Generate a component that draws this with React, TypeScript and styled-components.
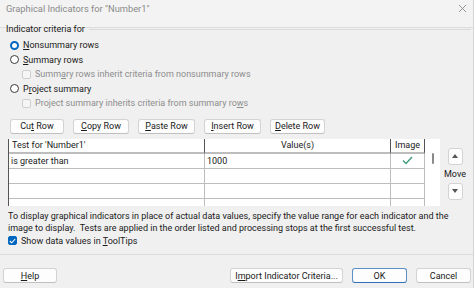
import React from "react";
import styled, { createGlobalStyle } from "styled-components";

const GlobalStyle = createGlobalStyle`
  html, body {
    margin: 0;
    padding: 0;
    background: #f0f0f0;
  }
  body {
    font-family: Roboto, "Noto Sans", sans-serif;
    font-size: 9px;
    color: #1a1a1a;
  }
`;

const Dialog = styled.div`
  width: 474px;
  height: 288px;
  box-sizing: border-box;
  background: #f0f0f0;
  border-right: 1px solid #d4d4d4;
  display: flex;
  flex-direction: column;
  overflow: hidden;
`;

const TitleBar = styled.div`
  height: 28px;
  flex: none;
  box-sizing: border-box;
  background: #f3f3f3;
  border-bottom: 1px solid #dcdcdc;
  display: flex;
  align-items: center;
  justify-content: space-between;
  padding: 0 6px 11px 6px;
`;

const Title = styled.span`
  font-size: 9.3px;
  color: #8a8a8a;
`;

const Body = styled.div`
  flex: 1;
  display: flex;
  flex-direction: column;
  padding: 0 2px 0 6px;
`;

const GroupHeader = styled.div`
  display: flex;
  align-items: center;
  gap: 4px;
  height: 12px;
  margin-top: -5px;
  &::after {
    content: "";
    flex: 1;
    height: 1px;
    background: #dadada;
  }
`;

const OptionList = styled.div`
  display: flex;
  flex-direction: column;
  padding-left: 4px;
  margin-top: 3px;
`;

const OptionRow = styled.label<{ $indent?: boolean; $disabled?: boolean }>`
  display: flex;
  align-items: center;
  gap: 4px;
  height: 14.5px;
  padding-left: ${(p) => (p.$indent ? "12px" : "0")};
  color: ${(p) => (p.$disabled ? "#8d8d8d" : "#1a1a1a")};
`;

const ShowRow = styled(OptionRow)`
  padding-left: 2px;
`;

const Radio = styled.span<{ $checked?: boolean }>`
  width: 9px;
  height: 9px;
  box-sizing: border-box;
  border-radius: 50%;
  border: ${(p) => (p.$checked ? "2.5px solid #0067c0" : "1px solid #3a3a3a")};
  background: #fff;
  flex: none;
`;

const Check = styled.span<{ $checked?: boolean }>`
  width: 9px;
  height: 9px;
  box-sizing: border-box;
  border-radius: 2px;
  border: 1px solid ${(p) => (p.$checked ? "#0067c0" : "#cfcfcf")};
  background: ${(p) => (p.$checked ? "#0067c0" : "#f5f5f5")};
  flex: none;
  display: flex;
  align-items: center;
  justify-content: center;
`;

const Key = styled.span`
  text-decoration: underline;
  text-underline-offset: 1px;
`;

const ButtonRow = styled.div`
  display: flex;
  gap: 9px;
  padding-left: 4px;
  margin-top: 8px;
`;

const Button = styled.button<{ $w: number; $default?: boolean }>`
  width: ${(p) => p.$w}px;
  height: 15px;
  padding: 0;
  font: inherit;
  color: #1a1a1a;
  background: #fdfdfd;
  border: 1px solid ${(p) => (p.$default ? "#5a8fc8" : "#d3d3d3")};
  border-bottom-color: ${(p) => (p.$default ? "#2f6fb5" : "#c0c0c0")};
  border-radius: 3px;
  display: flex;
  align-items: center;
  justify-content: center;
`;

const TableArea = styled.div`
  display: flex;
  margin-top: 5px;
  padding-left: 2px;
  gap: 6px;
`;

const Table = styled.div`
  width: 432px;
  height: 67px;
  background: #fff;
  display: flex;
  overflow: hidden;
`;

const Grid = styled.div`
  width: 416px;
  display: grid;
  grid-template-columns: 196px 186px 34px;
  grid-auto-rows: 15px;
  border-left: 1px solid #555;
  align-content: start;
`;

const HeadCell = styled.div<{ $align?: string }>`
  border-bottom: 2px solid #bdbdbd;
  border-right: 1px solid #555;
  display: flex;
  align-items: center;
  justify-content: ${(p) => p.$align || "center"};
  padding-left: ${(p) => (p.$align ? "3px" : "0")};
  box-sizing: border-box;
  height: 15px;
`;

const Cell = styled.div`
  border-bottom: 1px solid #bdbdbd;
  border-right: 1px solid #bdbdbd;
  display: flex;
  align-items: center;
  padding-left: 2px;
  box-sizing: border-box;
`;

const IconCell = styled(Cell)`
  justify-content: center;
  padding-left: 0;
`;

const ScrollTrack = styled.div`
  flex: 1;
  display: flex;
  justify-content: center;
  padding-top: 14px;
`;

const Thumb = styled.div`
  width: 2px;
  height: 11px;
  background: #8a8a8a;
  border-radius: 1px;
`;

const MoveColumn = styled.div`
  display: flex;
  flex-direction: column;
  align-items: center;
  gap: 4px;
  padding-top: 9px;
  margin-left: -2px;
`;

const MoveButton = styled.button`
  width: 15px;
  height: 17px;
  padding: 0;
  background: #fdfdfd;
  border: 1px solid #d3d3d3;
  border-radius: 3px;
  display: flex;
  align-items: center;
  justify-content: center;
`;

const Note = styled.p`
  margin: 4px 0 0 2px;
  line-height: 12px;
  white-space: nowrap;
`;

const Separator = styled.div`
  height: 1px;
  background: #dcdcdc;
  margin: 6px -2px 0 -6px;
`;

const Footer = styled.div`
  display: flex;
  align-items: center;
  margin: 13px 0 0 -3px;
  gap: 9px;
`;

const Spacer = styled.div`
  flex: 1;
`;

const rows = [
  { test: "is greater than", value: "1000", image: true },
  { test: "", value: "", image: false },
  { test: "", value: "", image: false },
  { test: "", value: "", image: false },
];

export default function App() {
  return (
    <>
      <GlobalStyle />
      <Dialog>
        <TitleBar>
          <Title>Graphical Indicators for "Number1"</Title>
          <svg width="9" height="9" viewBox="0 0 9 9">
            <path d="M1 1 L8 8 M8 1 L1 8" stroke="#8a8a8a" strokeWidth="0.9" />
          </svg>
        </TitleBar>
        <Body>
          <GroupHeader>Indicator criteria for</GroupHeader>
          <OptionList>
            <OptionRow>
              <Radio $checked />
              <span>
                <Key>N</Key>onsummary rows
              </span>
            </OptionRow>
            <OptionRow>
              <Radio />
              <span>
                <Key>S</Key>ummary rows
              </span>
            </OptionRow>
            <OptionRow $indent $disabled>
              <Check />
              <span>
                Summ<Key>a</Key>ry rows inherit criteria from nonsummary rows
              </span>
            </OptionRow>
            <OptionRow>
              <Radio />
              <span>
                P<Key>r</Key>oject summary
              </span>
            </OptionRow>
            <OptionRow $indent $disabled>
              <Check />
              <span>
                Project summary inherits criteria from summary ro<Key>w</Key>s
              </span>
            </OptionRow>
          </OptionList>
          <ButtonRow>
            <Button $w={54}>
              Cu<Key>t</Key>&nbsp;Row
            </Button>
            <Button $w={56}>
              <Key>C</Key>opy Row
            </Button>
            <Button $w={57}>
              <Key>P</Key>aste Row
            </Button>
            <Button $w={57}>
              <Key>I</Key>nsert Row
            </Button>
            <Button $w={55}>
              <Key>D</Key>elete Row
            </Button>
          </ButtonRow>
          <TableArea>
            <Table>
              <Grid>
                <HeadCell $align="flex-start">Test for 'Number1'</HeadCell>
                <HeadCell>Value(s)</HeadCell>
                <HeadCell>Image</HeadCell>
                {rows.map((r, i) => (
                  <React.Fragment key={i}>
                    <Cell>{r.test}</Cell>
                    <Cell>{r.value}</Cell>
                    <IconCell>
                      {r.image && (
                        <svg width="11" height="9" viewBox="0 0 11 9">
                          <path
                            d="M1 4.5 L4 7.5 L10 1"
                            fill="none"
                            stroke="#3f9a7a"
                            strokeWidth="1.4"
                          />
                        </svg>
                      )}
                    </IconCell>
                  </React.Fragment>
                ))}
              </Grid>
              <ScrollTrack>
                <Thumb />
              </ScrollTrack>
            </Table>
            <MoveColumn>
              <MoveButton>
                <svg width="6" height="4" viewBox="0 0 6 4">
                  <path d="M0 4 L3 0 L6 4 Z" fill="#555" />
                </svg>
              </MoveButton>
              <span>Move</span>
              <MoveButton>
                <svg width="6" height="4" viewBox="0 0 6 4">
                  <path d="M0 0 L3 4 L6 0 Z" fill="#555" />
                </svg>
              </MoveButton>
            </MoveColumn>
          </TableArea>
          <Note>
            To display graphical indicators in place of actual data values, specify the value range for each
            indicator and the
            <br />
            image to display.&nbsp; Tests are applied in the order listed and processing stops at the first
            successful test.
          </Note>
          <ShowRow>
            <Check $checked>
              <svg width="7" height="6" viewBox="0 0 7 6">
                <path d="M0.8 3 L2.7 4.8 L6.2 1" fill="none" stroke="#fff" strokeWidth="1.1" />
              </svg>
            </Check>
            <span>
              Show data values in <Key>T</Key>oolTips
            </span>
          </ShowRow>
          <Separator />
          <Footer>
            <Button $w={54}>
              <Key>H</Key>elp
            </Button>
            <Spacer />
            <Button $w={113}>
              I<Key>m</Key>port Indicator Criteria...
            </Button>
            <Button $w={55} $default>
              OK
            </Button>
            <Button $w={55}>Cancel</Button>
          </Footer>
        </Body>
      </Dialog>
    </>
  );
}
